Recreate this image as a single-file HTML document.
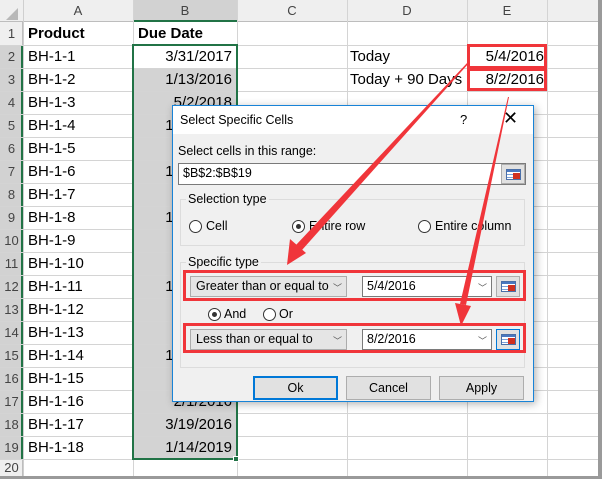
<!DOCTYPE html>
<html><head><style>
*{margin:0;padding:0;box-sizing:border-box}
body{width:602px;height:479px;overflow:hidden;background:#fff;position:relative;font-family:"Liberation Sans",sans-serif}
.a{position:absolute}
.vl{position:absolute;top:0;width:1px;height:476px;background:#d4d4d4}
.hl{position:absolute;left:0;height:1px;width:598px;background:#d4d4d4}
.rh{position:absolute;left:0;width:23px;height:23px;text-align:center;font-size:13px;line-height:23px;color:#444}
.c{position:absolute;font-size:15px;line-height:23px;color:#000;white-space:nowrap}
.d{font-size:12.5px;color:#000;position:absolute;white-space:nowrap}
.rad{position:absolute;width:13px;height:13px;border:1px solid #333;border-radius:50%;background:#fff}
.rad.on::after{content:"";position:absolute;left:3px;top:3px;width:5px;height:5px;border-radius:50%;background:#333}
.btn{position:absolute;height:24px;background:#e1e1e1;border:1px solid #adadad;font-size:12.5px;text-align:center;line-height:22px}
.inp{position:absolute;background:#fff;border:1px solid #7a7a7a;font-size:12.5px;line-height:19px;padding-left:4px}
.cmb{position:absolute;background:#e5e5e5;border:1px solid #acacac;font-size:12.5px;line-height:19px;padding-left:5px}
.ib{position:absolute;width:24px;height:21px;background:#e1e1e1;border:1px solid #adadad}
.ib i{position:absolute;left:4px;top:4px;width:15px;height:11px;background:linear-gradient(#4a78c0 0 2px,#fff 2px 4px,#7aa0d8 4px 5px,#fff 5px 7px,#7aa0d8 7px 8px,#fff 8px);border:1px solid #4a6fa8}
.ib b{position:absolute;left:11px;top:8px;width:7px;height:6px;background:#d03020}
.red{position:absolute;border:3px solid #f0353a}
.chev{position:absolute;font-size:9px;color:#555}
</style></head><body>
<div class="a" style="left:0;top:0;width:598px;height:22px;background:#efefef;border-bottom:1px solid #bdbdbd"></div>
<div class="a" style="left:133px;top:0;width:104px;height:22px;background:#d2d2d2;border-bottom:2px solid #217346"></div>
<div class="a" style="left:0;top:22px;width:23px;height:454px;background:#efefef;border-right:1px solid #bdbdbd"></div>
<div class="a" style="left:0;top:45px;width:23px;height:414px;background:#d2d2d2;border-right:2px solid #217346"></div>
<div class="a" style="left:6px;top:8px;width:0;height:0;border-left:12px solid transparent;border-bottom:12px solid #b8b8b8"></div>
<div class="a" style="left:133px;top:68px;width:104px;height:391px;background:#d3d3d3"></div>
<div class="vl" style="left:23px;top:0;background:#cfcfcf"></div>
<div class="vl" style="left:133px"></div>
<div class="vl" style="left:237px"></div>
<div class="vl" style="left:347px"></div>
<div class="vl" style="left:467px"></div>
<div class="vl" style="left:547px"></div>
<div class="hl" style="top:45px"></div><div class="hl" style="top:68px"></div><div class="hl" style="top:91px"></div><div class="hl" style="top:114px"></div><div class="hl" style="top:137px"></div><div class="hl" style="top:160px"></div><div class="hl" style="top:183px"></div><div class="hl" style="top:206px"></div><div class="hl" style="top:229px"></div><div class="hl" style="top:252px"></div><div class="hl" style="top:275px"></div><div class="hl" style="top:298px"></div><div class="hl" style="top:321px"></div><div class="hl" style="top:344px"></div><div class="hl" style="top:367px"></div><div class="hl" style="top:390px"></div><div class="hl" style="top:413px"></div><div class="hl" style="top:436px"></div><div class="hl" style="top:459px"></div>
<div class="a" style="left:23px;top:0;width:110px;line-height:22px;text-align:center;font-size:13px;color:#444">A</div>
<div class="a" style="left:133px;top:0;width:104px;line-height:22px;text-align:center;font-size:13px;color:#444">B</div>
<div class="a" style="left:237px;top:0;width:110px;line-height:22px;text-align:center;font-size:13px;color:#444">C</div>
<div class="a" style="left:347px;top:0;width:120px;line-height:22px;text-align:center;font-size:13px;color:#444">D</div>
<div class="a" style="left:467px;top:0;width:80px;line-height:22px;text-align:center;font-size:13px;color:#444">E</div>
<div class="rh" style="top:22px">1</div><div class="rh" style="top:45px">2</div><div class="rh" style="top:68px">3</div><div class="rh" style="top:91px">4</div><div class="rh" style="top:114px">5</div><div class="rh" style="top:137px">6</div><div class="rh" style="top:160px">7</div><div class="rh" style="top:183px">8</div><div class="rh" style="top:206px">9</div><div class="rh" style="top:229px">10</div><div class="rh" style="top:252px">11</div><div class="rh" style="top:275px">12</div><div class="rh" style="top:298px">13</div><div class="rh" style="top:321px">14</div><div class="rh" style="top:344px">15</div><div class="rh" style="top:367px">16</div><div class="rh" style="top:390px">17</div><div class="rh" style="top:413px">18</div><div class="rh" style="top:436px">19</div><div class="rh" style="top:459px;height:17px;line-height:17px">20</div>
<div class="c" style="left:28px;top:22px;font-weight:bold">Product</div>
<div class="c" style="left:138px;top:22px;font-weight:bold">Due Date</div>
<div class="c" style="left:28px;top:45px">BH-1-1</div><div class="c" style="left:28px;top:68px">BH-1-2</div><div class="c" style="left:28px;top:91px">BH-1-3</div><div class="c" style="left:28px;top:114px">BH-1-4</div><div class="c" style="left:28px;top:137px">BH-1-5</div><div class="c" style="left:28px;top:160px">BH-1-6</div><div class="c" style="left:28px;top:183px">BH-1-7</div><div class="c" style="left:28px;top:206px">BH-1-8</div><div class="c" style="left:28px;top:229px">BH-1-9</div><div class="c" style="left:28px;top:252px">BH-1-10</div><div class="c" style="left:28px;top:275px">BH-1-11</div><div class="c" style="left:28px;top:298px">BH-1-12</div><div class="c" style="left:28px;top:321px">BH-1-13</div><div class="c" style="left:28px;top:344px">BH-1-14</div><div class="c" style="left:28px;top:367px">BH-1-15</div><div class="c" style="left:28px;top:390px">BH-1-16</div><div class="c" style="left:28px;top:413px">BH-1-17</div><div class="c" style="left:28px;top:436px">BH-1-18</div>
<div class="c" style="right:370px;top:45px">3/31/2017</div><div class="c" style="right:370px;top:68px">1/13/2016</div><div class="c" style="right:370px;top:91px">5/2/2018</div><div class="c" style="right:370px;top:114px">10/8/2016</div><div class="c" style="right:370px;top:137px">7/5/2016</div><div class="c" style="right:370px;top:160px">12/1/2016</div><div class="c" style="right:370px;top:183px">9/6/2016</div><div class="c" style="right:370px;top:206px">12/3/2016</div><div class="c" style="right:370px;top:229px">8/1/2016</div><div class="c" style="right:370px;top:252px">2/1/2016</div><div class="c" style="right:370px;top:275px">10/5/2016</div><div class="c" style="right:370px;top:298px">6/1/2016</div><div class="c" style="right:370px;top:321px">9/1/2016</div><div class="c" style="right:370px;top:344px">12/1/2016</div><div class="c" style="right:370px;top:367px">2/1/2016</div><div class="c" style="right:370px;top:390px">2/1/2016</div><div class="c" style="right:370px;top:413px">3/19/2016</div><div class="c" style="right:370px;top:436px">1/14/2019</div>
<div class="a" style="left:132px;top:44px;width:106px;height:416px;border:2px solid #217346"></div>
<div class="a" style="left:233px;top:456px;width:6px;height:6px;background:#217346;border:1px solid #fff"></div>
<div class="c" style="left:350px;top:45px">Today</div>
<div class="c" style="left:350px;top:68px">Today + 90 Days</div>
<div class="c" style="right:58px;top:45px">5/4/2016</div>
<div class="c" style="right:58px;top:68px">8/2/2016</div>
<div class="red" style="left:467px;top:44px;width:80px;height:25px"></div>
<div class="red" style="left:467px;top:68px;width:80px;height:23px"></div>
<div class="a" style="left:598px;top:0;width:4px;height:479px;background:#9a9a9a"></div>
<div class="a" style="left:0;top:476px;width:602px;height:3px;background:#9a9a9a"></div>
<div class="a" style="left:172px;top:105px;width:362px;height:297px;background:#f0f0f0;border:1px solid #1883d7;box-shadow:2px 2px 8px rgba(0,0,0,.3)">
 <div class="a" style="left:0;top:0;width:360px;height:28px;background:#fff"></div>
</div>
<div class="d" style="left:180px;top:113px">Select Specific Cells</div>
<div class="d" style="left:460px;top:112px;font-size:13px">?</div>
<div class="d" style="left:503px;top:108px;font-size:18px;font-weight:300">✕</div>
<div class="d" style="left:178px;top:144px">Select cells in this range:</div>
<div class="inp" style="left:178px;top:163px;width:348px;height:22px">$B$2:$B$19</div>
<div class="ib" style="left:501px;top:164px;height:20px"><i></i><b></b></div>
<div class="a" style="left:180px;top:199px;width:345px;height:47px;border:1px solid #dcdcdc"></div>
<div class="d" style="left:186px;top:192px;background:#f0f0f0;padding:0 2px">Selection type</div>
<div class="rad" style="left:189px;top:220px"></div><div class="d" style="left:206px;top:219px">Cell</div>
<div class="rad on" style="left:292px;top:220px"></div><div class="d" style="left:309px;top:219px">Entire row</div>
<div class="rad" style="left:418px;top:220px"></div><div class="d" style="left:435px;top:219px">Entire column</div>
<div class="a" style="left:180px;top:262px;width:345px;height:106px;border:1px solid #dcdcdc"></div>
<div class="d" style="left:186px;top:255px;background:#f0f0f0;padding:0 2px">Specific type</div>
<div class="cmb" style="left:190px;top:276px;width:157px;height:21px">Greater than or equal to</div>
<div class="chev" style="left:333px;top:281px">﹀</div>
<div class="inp" style="left:362px;top:276px;width:130px;height:21px">5/4/2016</div>
<div class="chev" style="left:478px;top:281px">﹀</div>
<div class="ib" style="left:496px;top:276px"><i></i><b></b></div>
<div class="red" style="left:183px;top:270px;width:343px;height:31px"></div>
<div class="rad on" style="left:208px;top:308px"></div><div class="d" style="left:224px;top:307px">And</div>
<div class="rad" style="left:263px;top:308px"></div><div class="d" style="left:279px;top:307px">Or</div>
<div class="cmb" style="left:190px;top:329px;width:157px;height:21px">Less than or equal to</div>
<div class="chev" style="left:333px;top:334px">﹀</div>
<div class="inp" style="left:362px;top:329px;width:130px;height:21px">8/2/2016</div>
<div class="chev" style="left:478px;top:334px">﹀</div>
<div class="ib" style="left:496px;top:329px;border-color:#0078d7"><i></i><b></b></div>
<div class="red" style="left:183px;top:323px;width:343px;height:30px"></div>
<div class="btn" style="left:253px;top:376px;width:85px;border:2px solid #0078d7;line-height:20px">Ok</div>
<div class="btn" style="left:346px;top:376px;width:85px">Cancel</div>
<div class="btn" style="left:439px;top:376px;width:85px">Apply</div>
<svg class="a" style="left:0;top:0" width="602" height="479">
 <polygon points="468,62 469,63 302,250 296,245" fill="#f0353a"/>
 <polygon points="306,253 290,239 287,265" fill="#f0353a"/>
 <polygon points="508,97 509,97 466,305 460,304" fill="#f0353a"/>
 <polygon points="455,303 471,306 461,326" fill="#f0353a"/>
</svg>
</body></html>
